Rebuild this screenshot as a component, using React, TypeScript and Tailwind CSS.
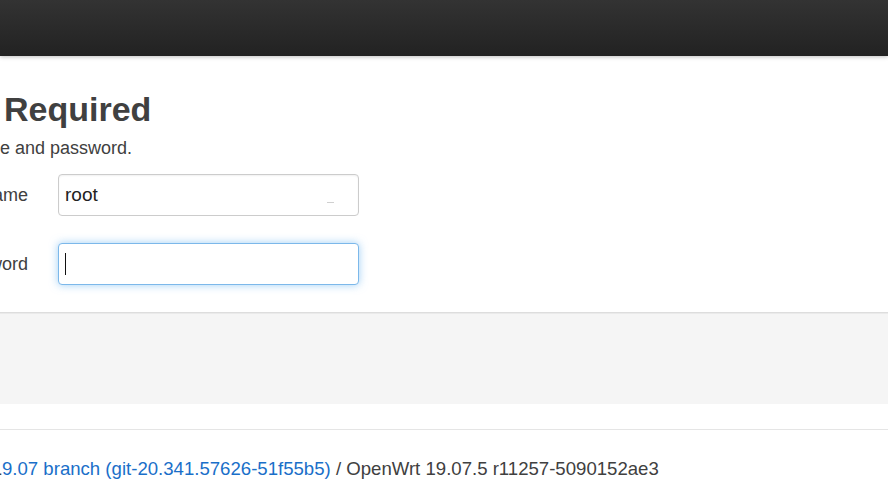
import React from 'react';

// hidden part of a text that runs off the left edge of the window
const Clip: React.FC<{ w: string; children: React.ReactNode }> = ({ w, children }) => (
  <span className={`flex shrink-0 justify-end ${w}`}>
    <span className="shrink-0 whitespace-pre">{children}</span>
  </span>
);

const App: React.FC = () => {
  return (
    <div className="min-h-screen w-full overflow-hidden bg-white font-['Liberation_Sans',Arial,sans-serif] text-[#404040]">
      {/* top navbar */}
      <div className="relative z-10 h-[56px] bg-gradient-to-b from-[#333333] to-[#222222] shadow-[0_1px_4px_rgba(0,0,0,0.25)]" />

      {/* login form */}
      <div className="pt-[33px]">
        <h2 className="flex whitespace-nowrap text-[34px] font-bold leading-[40px]">
          <Clip w="w-[4px]">Authorization </Clip>
          <span>Required</span>
        </h2>
        <p className="mt-[7px] flex whitespace-nowrap text-[18px] leading-[24px]">
          <Clip w="w-0">Please enter your usernam</Clip>
          <span>e and password.</span>
        </p>

        <div className="mt-[14px] flex flex-col gap-[27px]">
          <div className="flex items-center">
            <label className="flex w-[28px] shrink-0 justify-end whitespace-nowrap text-[18px]">Username</label>
            <div className="relative ml-[30px]">
              <input
                readOnly
                value="root"
                className="h-[42px] w-[301px] rounded-[4px] border border-[#cccccc] bg-white px-[6px] text-[19px] text-[#222] shadow-[inset_0_1px_2px_rgba(0,0,0,0.06)] outline-none"
              />
              <span className="absolute left-[269px] top-[28px] h-px w-[7px] bg-[#d0d0d0]" />
            </div>
          </div>
          <div className="flex items-center">
            <label className="flex w-[28px] shrink-0 justify-end whitespace-nowrap text-[18px]">Password</label>
            <div className="relative ml-[30px]">
              <input
                readOnly
                type="password"
                className="h-[42px] w-[301px] rounded-[4px] border border-[#7cb8ea] bg-white px-[6px] text-[19px] shadow-[0_0_8px_rgba(82,168,236,0.55)] outline-none"
              />
              <span className="absolute left-[7px] top-[10px] h-[22px] w-px bg-[#111]" />
            </div>
          </div>
        </div>

        {/* actions band */}
        <div className="mt-[27px] h-[92px] border-t border-[#dddddd] bg-[#f5f5f5] shadow-[inset_0_1px_0_#eaeaea]" />
      </div>

      {/* footer */}
      <hr className="mt-[25px] border-t border-[#e5e5e5]" />
      <footer className="mt-[27px] flex whitespace-nowrap text-[18.6px] leading-[24px]">
        <Clip w="w-[2px]">Powered by LuCI openwrt-1</Clip>
        <a className="text-[#1a6fc9]">9.07 branch (git-20.341.57626-51f55b5)</a>
        <span>&nbsp;/ OpenWrt 19.07.5 r11257-5090152ae3</span>
      </footer>
    </div>
  );
};

export default App;
